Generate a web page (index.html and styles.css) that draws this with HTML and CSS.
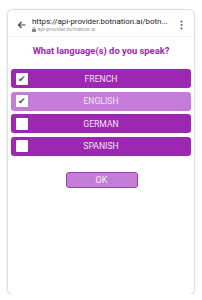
FILE: index.html
```html
<!DOCTYPE html>
<html>
<head>
<meta charset="utf-8">
<link rel="stylesheet" href="styles.css">
</head>
<body>
<div class="card">
  <div class="bar">
    <svg class="back" width="9" height="8" viewBox="0 0 9 8"><path d="M8.5 4H1.5M4.5 1L1.5 4L4.5 7" fill="none" stroke="#444" stroke-width="1.2"/></svg>
    <div class="addr">
      <div class="url">https://api-provider.botnation.ai/botn...</div>
      <div class="host"><svg width="4" height="5" viewBox="0 0 4 5"><rect x="0" y="2" width="4" height="3" fill="#888"/><path d="M1 2V1.3a1 1 0 0 1 2 0V2" fill="none" stroke="#888" stroke-width="0.7"/></svg>api-provider.botnation.ai</div>
    </div>
    <svg class="menu" width="3" height="10" viewBox="0 0 3 10"><circle cx="1.5" cy="1.5" r="1" fill="#555"/><circle cx="1.5" cy="5" r="1" fill="#555"/><circle cx="1.5" cy="8.5" r="1" fill="#555"/></svg>
  </div>
  <div class="content">
    <div class="title">What language(s) do you speak?</div>
    <div class="list">
      <div class="opt dark"><span class="box">✔</span><span class="label">FRENCH</span></div>
      <div class="opt light"><span class="box">✔</span><span class="label">ENGLISH</span></div>
      <div class="opt dark"><span class="box"></span><span class="label">GERMAN</span></div>
      <div class="opt dark"><span class="box"></span><span class="label">SPANISH</span></div>
    </div>
    <div class="okwrap"><div class="ok">OK</div></div>
  </div>
</div>
</body>
</html>
```
FILE: styles.css
```css
html, body { margin: 0; padding: 0; background: #fff; }
body { font-family: Roboto, "Liberation Sans", sans-serif; }
.card {
  margin: 10px 8px 0 8px;
  width: 186px;
  height: 284px;
  box-sizing: border-box;
  border-radius: 5px;
  background: #fff;
  box-shadow: 0 0 1px 1px #ddd, 0 1px 3px rgba(0,0,0,0.18);
  overflow: hidden;
}
.bar {
  height: 27px;
  display: flex;
  align-items: center;
  padding: 3px 8px 0 8px;
  border-bottom: 1px solid #f0f0f0;
  box-sizing: border-box;
}
.back { margin-left: 1px; margin-right: 6px; }
.addr { flex: 1; display: flex; flex-direction: column; margin-top: 1px; }
.url { font-size: 7.9px; color: #222; line-height: 9px; white-space: nowrap; }
.host { font-size: 5.4px; color: #999; line-height: 7px; display: flex; align-items: center; gap: 1.5px; }
.menu { margin-right: 3px; }
.content { padding: 7px 3px 0 3px; }
.title {
  color: #9c27b0;
  font-weight: bold;
  font-size: 9.4px;
  text-align: center;
  line-height: 13px;
}
.list { margin-top: 12px; display: flex; flex-direction: column; gap: 3.5px; }
.opt {
  height: 19px;
  border-radius: 3px;
  display: flex;
  align-items: center;
  position: relative;
  padding-left: 5px;
}
.dark { background: #9c27b0; }
.light { background: #c37dd6; }
.box {
  width: 12px; height: 12px; background: #fff;
  border-radius: 1px;
  color: #555; font-size: 9px; line-height: 13px; text-align: center;
}
.label {
  flex: 1; text-align: center; color: #f3e1f7; font-size: 8.6px; margin-right: 17px;
}
.okwrap { display: flex; justify-content: center; margin-top: 16px; }
.ok {
  width: 72px; height: 16px; box-sizing: border-box;
  border: 1px solid #a23bbf; border-radius: 3px;
  background: #c37dd6; color: #f7ecfa;
  font-size: 9px; text-align: center; line-height: 14px;
  margin-left: 1px;
}
```
